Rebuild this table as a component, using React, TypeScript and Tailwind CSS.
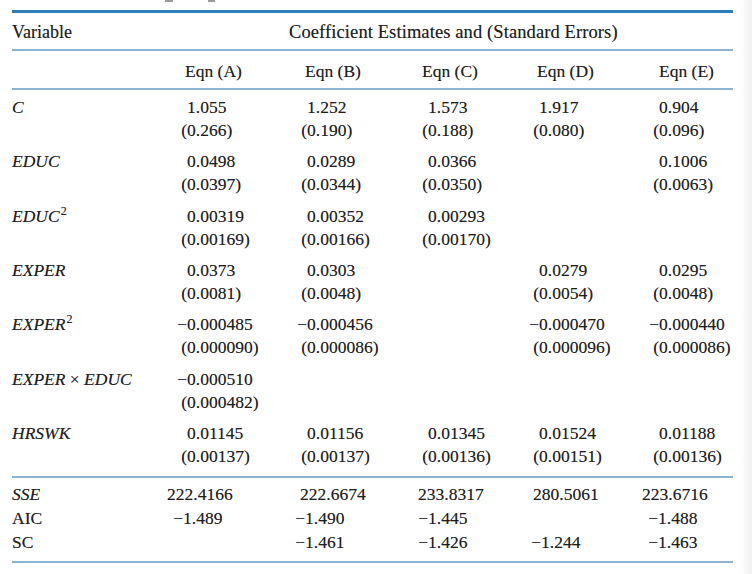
import React from "react";

type Pair = [string, string] | null;

const Sup = () => (
  <sup className="text-[12px] top-[-7px] ml-[1px] not-italic">2</sup>
);

const rows: { label: React.ReactNode; cells: Pair[] }[] = [
  {
    label: <i>C</i>,
    cells: [
      ["1.055", "(0.266)"],
      ["1.252", "(0.190)"],
      ["1.573", "(0.188)"],
      ["1.917", "(0.080)"],
      ["0.904", "(0.096)"],
    ],
  },
  {
    label: <i>EDUC</i>,
    cells: [
      ["0.0498", "(0.0397)"],
      ["0.0289", "(0.0344)"],
      ["0.0366", "(0.0350)"],
      null,
      ["0.1006", "(0.0063)"],
    ],
  },
  {
    label: (
      <span>
        <i>EDUC</i>
        <Sup />
      </span>
    ),
    cells: [
      ["0.00319", "(0.00169)"],
      ["0.00352", "(0.00166)"],
      ["0.00293", "(0.00170)"],
      null,
      null,
    ],
  },
  {
    label: <i>EXPER</i>,
    cells: [
      ["0.0373", "(0.0081)"],
      ["0.0303", "(0.0048)"],
      null,
      ["0.0279", "(0.0054)"],
      ["0.0295", "(0.0048)"],
    ],
  },
  {
    label: (
      <span>
        <i>EXPER</i>
        <Sup />
      </span>
    ),
    cells: [
      ["\u22120.000485", "(0.000090)"],
      ["\u22120.000456", "(0.000086)"],
      null,
      ["\u22120.000470", "(0.000096)"],
      ["\u22120.000440", "(0.000086)"],
    ],
  },
  {
    label: (
      <span>
        <i>EXPER</i> × <i>EDUC</i>
      </span>
    ),
    cells: [["\u22120.000510", "(0.000482)"], null, null, null, null],
  },
  {
    label: <i>HRSWK</i>,
    cells: [
      ["0.01145", "(0.00137)"],
      ["0.01156", "(0.00137)"],
      ["0.01345", "(0.00136)"],
      ["0.01524", "(0.00151)"],
      ["0.01188", "(0.00136)"],
    ],
  },
];

const summary: { label: React.ReactNode; vals: string[]; margins: string[] }[] = [
  {
    label: <i>SSE</i>,
    vals: ["222.4166", "222.6674", "233.8317", "280.5061", "223.6716"],
    margins: ["ml-[-20px]", "ml-[-7px]", "ml-[-10px]", "ml-[-6px]", "ml-[-17px]"],
  },
  {
    label: <span>AIC</span>,
    vals: ["\u22121.489", "\u22121.490", "\u22121.445", "", "\u22121.488"],
    margins: ["ml-[-4px]", "ml-[-2px]", "ml-[0px]", "ml-[2px]", "ml-[-1px]"],
  },
  {
    label: <span>SC</span>,
    vals: ["", "\u22121.461", "\u22121.426", "\u22121.244", "\u22121.463"],
    margins: ["ml-[-4px]", "ml-[-2px]", "ml-[0px]", "ml-[2px]", "ml-[-1px]"],
  },
];

const GRID = "grid grid-cols-[160px_120px_121px_111px_120px_89px]";

function Num({ s }: { s: string }) {
  const first = s.charAt(0);
  const hang = first === "(" || first === "\u2212";
  return (
    <div className="flex h-[23px] items-center whitespace-nowrap">
      <span className="w-[15px] text-right">{hang ? first : ""}</span>
      <span>{hang ? s.slice(1) : s}</span>
    </div>
  );
}

const headerPads = ["pl-[13px]", "pl-[13px]", "pl-[9px]", "pl-[13px]", "pl-[15px]"];

export default function App() {
  return (
    <div
      className="w-[752px] h-[574px] overflow-hidden bg-[linear-gradient(to_right,#ffffff_0px,#ffffff_740px,#f1f1f1_752px)] text-[#1f1f1f] text-[17.5px] leading-[23px] [text-shadow:0_0_0.5px_rgba(0,0,0,0.45)]"
      style={{ fontFamily: '"Liberation Serif", "Times New Roman", serif' }}
    >
      <div className="pl-[12px]">
        <div className="flex h-[3px]">
          <span className="ml-[153px] w-[8px] h-[2px] bg-[#9a9a9a]" />
          <span className="ml-[35px] w-[7px] h-[2px] bg-[#9a9a9a]" />
        </div>
        <div className="w-[721px]">
          <div className="mt-[7px] h-[3px] bg-[#2f7db8]" />
          <div className="flex h-[36px] items-center pt-[3px]">
            <div className="w-[277px] text-[18px]">Variable</div>
            <div className="text-[18.5px] tracking-[0.1px]">
              Coefficient Estimates and (Standard Errors)
            </div>
          </div>
          <div className="h-[2px] bg-[#8db3d1]" />
          <div className={`${GRID} h-[37px] items-center pt-[3px]`}>
            <div />
            {["A", "B", "C", "D", "E"].map((c, i) => (
              <div key={c} className={headerPads[i]}>
                Eqn ({c})
              </div>
            ))}
          </div>
          <div className="h-[2px] bg-[#8db3d1]" />
          <div className="pt-[6px]">
            {rows.map((r, ri) => (
              <div key={ri} className={`${GRID} h-[54.33px]`}>
                <div className="h-[23px] flex items-center">{r.label}</div>
                {r.cells.map((c, ci) => (
                  <div key={ci}>
                    {c ? (
                      <>
                        <Num s={c[0]} />
                        <Num s={c[1]} />
                      </>
                    ) : null}
                  </div>
                ))}
              </div>
            ))}
          </div>
          <div className="h-[2px] bg-[#8db3d1]" />
          <div className="pt-[4px] pb-[7px]">
            {summary.map((r, ri) => (
              <div key={ri} className={`${GRID} h-[24px] items-center`}>
                <div>{r.label}</div>
                {r.vals.map((v, vi) => (
                  <div key={vi} className={r.margins[vi]}>
                    {v ? <Num s={v} /> : null}
                  </div>
                ))}
              </div>
            ))}
          </div>
          <div className="h-[2px] bg-[#8db3d1]" />
        </div>
      </div>
    </div>
  );
}
